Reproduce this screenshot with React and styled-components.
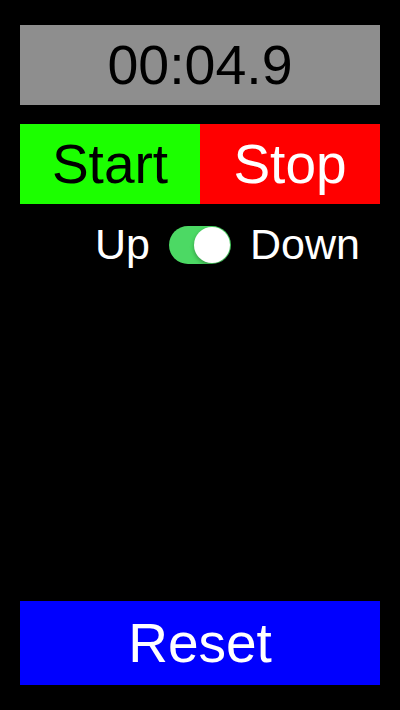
import React, { useState } from 'react'
import styled, { createGlobalStyle } from 'styled-components'

const Global = createGlobalStyle`
  html, body {
    margin: 0;
    padding: 0;
    background: #000;
  }
  * { box-sizing: border-box; }
`

const Screen = styled.div`
  height: 100vh;
  display: flex;
  flex-direction: column;
  padding: 25px 20px 25px;
  font-family: "Liberation Sans", Arial, sans-serif;
`

const Display = styled.div`
  height: 80px;
  background: #8e8e8e;
  color: #000;
  font-size: 55.5px;
  display: flex;
  align-items: center;
  justify-content: center;
`

const Buttons = styled.div`
  margin-top: 19px;
  display: flex;
  height: 80px;
`

const Btn = styled.button`
  flex: 1;
  border: none;
  margin: 0;
  padding: 0;
  font-family: inherit;
  font-size: 55px;
  background: ${p => p.$bg};
  color: ${p => p.$fg};
  display: flex;
  align-items: center;
  justify-content: center;
`

const ToggleRow = styled.div`
  margin-top: 19px;
  height: 38px;
  display: grid;
  grid-template-columns: 1fr auto 1fr;
  align-items: center;
  column-gap: 19px;
  color: #fff;
  font-size: 43px;
`

const Label = styled.span`
  text-align: ${p => p.$align};
  line-height: 1;
`

const Switch = styled.div`
  width: 62px;
  height: 38px;
  border-radius: 19px;
  background: ${p => (p.$on ? '#4cd964' : '#e5e5ea')};
  display: flex;
  align-items: center;
  justify-content: ${p => (p.$on ? 'flex-end' : 'flex-start')};
  padding: 1px;
  cursor: pointer;
`

const Knob = styled.div`
  width: 36px;
  height: 36px;
  border-radius: 50%;
  background: #fff;
  box-shadow: 0 2px 4px rgba(0, 0, 0, 0.3);
`

const ResetBtn = styled(Btn)`
  flex: none;
  margin-top: auto;
  height: 84px;
`

export default function App() {
  const [down, setDown] = useState(true)
  return (
    <Screen>
      <Global />
      <Display>00:04.9</Display>
      <Buttons>
        <Btn $bg="#1cff00" $fg="#000">Start</Btn>
        <Btn $bg="#ff0000" $fg="#fff">Stop</Btn>
      </Buttons>
      <ToggleRow>
        <Label $align="right">Up</Label>
        <Switch $on={down} onClick={() => setDown(!down)}>
          <Knob />
        </Switch>
        <Label $align="left">Down</Label>
      </ToggleRow>
      <ResetBtn $bg="#0000ff" $fg="#fff">Reset</ResetBtn>
    </Screen>
  )
}
